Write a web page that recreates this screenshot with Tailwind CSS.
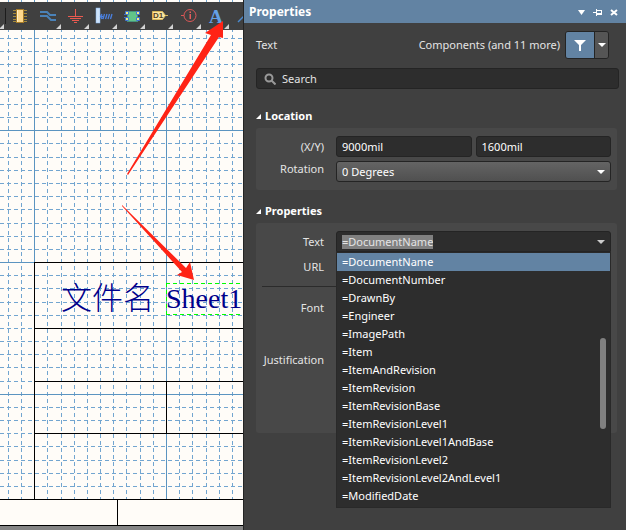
<!DOCTYPE html>
<html lang="en">

<head>
    <meta charset="UTF-8">
    <meta name="viewport" content="width=device-width, initial-scale=1.0">
    <title>Schematic - Properties</title>
    <script src="https://cdn.jsdelivr.net/npm/@tailwindcss/browser@4"></script>
</head>

<body class="relative flex min-h-screen overflow-hidden bg-[#404040] font-['Noto_Sans',sans-serif] text-[11px] leading-4 text-[#e4e4e4]">

    <!-- Schematic editor -->
    <main class="relative min-w-0 flex-1 overflow-hidden bg-[#fffcf8]">
        <svg class="absolute inset-0 h-full w-full" fill="none" shape-rendering="crispEdges" aria-label="Schematic sheet">
            <!-- Fine grid -->
            <g stroke="#72a5d0" stroke-dasharray="4 3">
                <path d="M0 38.5h900M0 51.5h900M0 64.5h900M0 77.5h900M0 91.5h900M0 104.5h900M0 117.5h900M0 143.5h900M0 157.5h900M0 170.5h900M0 183.5h900M0 196.5h900M0 209.5h900M0 223.5h900M0 236.5h900M0 249.5h900M0 275.5h900M0 288.5h900M0 302.5h900M0 315.5h900M0 328.5h900M0 341.5h900M0 354.5h900M0 367.5h900M0 381.5h900M0 407.5h900M0 420.5h900M0 433.5h900M0 446.5h900M0 460.5h900M0 473.5h900M0 486.5h900" />
                <path d="M8.5 0v499M21.5 0v499M47.5 0v499M61.5 0v499M74.5 0v499M87.5 0v499M100.5 0v499M113.5 0v499M126.5 0v499M140.5 0v499M153.5 0v499M179.5 0v499M192.5 0v499M206.5 0v499M219.5 0v499M232.5 0v499" />
            </g>
            <!-- Coarse grid -->
            <path stroke="#5b94c0" d="M0 130.5h900M0 262.5h900M0 394.5h900M34.5 0v499M166.5 0v499" />
            <!-- Title block -->
            <path stroke="#000" d="M34.5 499V262.5H900M34 328.5h900M34 381.5h900M34 433.5h900M166.5 381v52M0 499.5h900M117.5 499v26M0 525.5h900" />
            <path fill="#858585" d="M0 526h900v400H0z" />
            <path stroke="#00ff00" stroke-dasharray="4 3" d="M166 283.5h300M166.5 283v31M166 314.5h300" />
        </svg>
        <svg class="absolute inset-0 h-full w-full" aria-hidden="true">
            <g fill="#00008b">
                <text x="61" y="309" font-size="31" font-family="'Noto Sans CJK SC', sans-serif" font-weight="300">文件名</text>
                <text x="166" y="308" font-size="28" font-family="'Liberation Serif', serif">Sheet1</text>
            </g>
        </svg>

        <!-- Drawing toolbar -->
        <div class="absolute inset-x-0 top-[2px] h-7 bg-[#404040]">
            <svg class="h-7 w-[243px]" viewBox="0 2 243 28" fill="none" role="img" aria-label="Drawing tools">
                <path stroke="#1c1c1c" d="M5.500 8v16" />
                <!-- part -->
                <path stroke="#a48a3c" d="M13 10.500h14M13 13.500h14M13 16.500h14M13 19.500h14M13 21.500h14" />
                <rect x="16.500" y="9.500" width="7" height="13" fill="#ffd98c" stroke="#a87c28" />
                <path stroke="#fff0c8" d="M17.500 10v12" />
                <!-- wire -->
                <path stroke="#4a82b8" stroke-width="2" d="M40 12h7l3 3h6M40 16h7l4 4h5" />
                <!-- ground -->
                <path stroke="#ea5a50" d="M75.500 9v7M68 16.500h15M70 18.500h11M72 20.500h7M74 22.500h3" />
                <!-- bus -->
                <rect x="96" y="8" width="4" height="15" fill="#cfe3fa" stroke="#84b4ec" stroke-width=".5" />
                <path stroke="#4a80e0" stroke-width="1.300" d="M100 16.500h3M102 14l-1.500 2.500L102 19M103 19l1.500-5M105.500 19l1.500-5M108 19l1.500-5M110.500 19l1.500-5" />
                <path stroke="#3f73d0" d="M124 14.500h1M124 17.500h1" />
                <!-- sheet -->
                <rect x="127.500" y="11.500" width="10" height="10" fill="#62c489" stroke="#47947c" />
                <path fill="#f1ed82" stroke="#3f73d0" d="M125.500 11.500h3v3h-3zM125.500 17.500h3v3h-3zM136.500 11.500h3v3h-3zM136.500 17.500h3v3h-3z" />
                <!-- port -->
                <path fill="#ffe6a0" stroke="#d9b95b" d="M152.500 11.500h10l3 4-3 4h-10zM165 15.500h3" />
                <text x="153" y="18" font-size="8" font-weight="700" fill="#4f4223" font-family="'Liberation Sans', sans-serif">D1</text>
                <!-- directive -->
                <circle cx="190" cy="15.500" r="6" stroke="#dc5757" />
                <path stroke="#dc5757" d="M181 15.500h3" />
                <path fill="#e65c5c" d="M189.500 11.500h1.500v1.500h-1.500zM189.500 14h1.500v5h-1.500z" />
                <!-- text -->
                <text x="209" y="23" font-size="19" font-weight="700" fill="#64a0e6" font-family="'Liberation Serif', serif">A</text>
                <!-- line -->
                <path stroke="#4a8ad0" stroke-width="1.500" d="M238 22l6-6" />
                <path fill="#d2d2d2" d="M4 24v5H-1zM61 24v5h-5zM89 24v5h-5zM117 24v5h-5zM145 24v5h-5zM173 24v5h-5zM201 24v5h-5zM229 24v5h-5z" />
            </svg>
        </div>

        <!-- Pointers -->
        <svg class="absolute inset-0 h-full w-full" fill="#ff2315" aria-hidden="true">
            <path d="M127 174L211 35l-6-2 18-12v17l-4-1L128 175z" />
            <path d="M122 205l64 63 4-6 4 18-17-5 5-3-60-66z" />
        </svg>
    </main>

    <!-- Properties panel -->
    <aside class="w-[383px] shrink-0 border-l border-[#242424]">
        <header class="flex h-[23px] items-center bg-[#6283a3] pr-1.5 pl-[5px] text-white">
            <h1 class="flex-1 text-[12px] font-bold">Properties</h1>
            <div class="flex gap-1">
                <button aria-label="Menu"><svg class="size-3" viewBox="0 0 12 12"><path fill="#fff" d="M2 4h7l-3.500 5z" /></svg></button>
                <button aria-label="Pin"><svg class="size-3" viewBox="0 0 12 12" fill="none" stroke="#fff" shape-rendering="crispEdges"><path d="M1 6.500h4M4.500 3v7M4 4.500h5M9.500 4v5M4 7.500h5M4 8.500h5" /></svg></button>
                <button aria-label="Close"><svg class="size-3" viewBox="0 0 12 12" stroke="#fff" stroke-width="2"><path d="M3 4l6 5M9 4l-6 5" /></svg></button>
            </div>
        </header>

        <div class="flex items-center pt-2 pr-[17px] pl-3">
            <span class="flex-1">Text</span>
            <span>Components (and 11 more)</span>
            <div class="ml-[5px] flex h-7 overflow-hidden rounded-[3px] border border-[#242424]">
                <button class="flex w-7 items-center justify-center bg-[#6283a3]" aria-label="Filter"><svg class="size-3" viewBox="0 0 12 12"><path fill="#fff" d="M0 1h12L7 6v6H5V6z" /></svg></button>
                <button class="flex w-[14px] items-center justify-center border-l border-[#242424] bg-[#555]" aria-label="Filter options"><svg class="h-1 w-2" viewBox="0 0 8 4"><path fill="#fff" d="M0 0h8L4 4z" /></svg></button>
            </div>
        </div>

        <label class="mt-[9px] mr-[7px] ml-3 flex h-[21px] items-center gap-1.5 rounded-[3px] border border-[#242424] bg-[#2d2d2d] px-[7px]">
            <svg class="size-3" viewBox="0 0 12 12" fill="none" stroke="#999" stroke-width="2"><circle cx="5" cy="5" r="3.500" /><path d="M7.500 7.500l4 4" /></svg>
            <input class="h-4 min-w-0 flex-1 text-white outline-none placeholder:text-[#e4e4e4]" type="text" placeholder="Search" aria-label="Search">
        </label>

        <!-- Location -->
        <section class="mt-[19px] mr-[9px] ml-3">
            <h2 class="flex h-4 items-center gap-1 font-bold text-white"><svg class="size-[5px]" viewBox="0 0 5 5"><path fill="#fff" d="M5 0v5H0z" /></svg>Location</h2>
            <div class="mt-1 grid grid-cols-[68px_minmax(0,1fr)] gap-x-3 gap-y-1 rounded-[3px] bg-[#484848] pt-2 pr-1.5 pb-2">
                <label class="self-center text-right" for="loc-x">(X/Y)</label>
                <div class="flex gap-1">
                    <input id="loc-x" class="h-[21px] min-w-0 flex-1 rounded-[3px] border border-[#242424] bg-[#2d2d2d] px-[5px] text-white" type="text" value="9000mil">
                    <input class="h-[21px] min-w-0 flex-1 rounded-[3px] border border-[#242424] bg-[#2d2d2d] px-[5px] text-white" type="text" value="1600mil" aria-label="Y">
                </div>
                <label class="text-right" for="rotation">Rotation</label>
                <div class="relative">
                    <select id="rotation" class="block h-[21px] w-full appearance-none rounded-[3px] border border-[#242424] bg-linear-to-b from-[#646464] to-[#505050] px-[5px] text-white">
                        <option>0 Degrees</option>
                    </select>
                    <svg class="pointer-events-none absolute top-[9px] right-[6px] h-1 w-2" viewBox="0 0 8 4"><path fill="#fff" d="M0 0h8L4 4z" /></svg>
                </div>
            </div>
        </section>

        <!-- Properties -->
        <section class="mt-[13px] mr-[9px] ml-3">
            <h2 class="flex h-4 items-center gap-1 font-bold text-white"><svg class="size-[5px]" viewBox="0 0 5 5"><path fill="#fff" d="M5 0v5H0z" /></svg>Properties</h2>
            <div class="mt-1 h-[210px] rounded-[3px] bg-[#484848] pt-2 pr-1.5">
                <div class="grid grid-cols-[68px_minmax(0,1fr)] gap-x-3">
                    <label class="self-center text-right" for="text-value">Text</label>
                    <div class="relative">
                        <div class="flex h-[21px] items-center rounded-t-[3px] border border-[#242424] bg-[#2d2d2d] px-[5px]">
                            <input id="text-value" class="field-sizing-content h-[14px] bg-[#808080] text-[#e4e4e4] outline-none" type="text" value="=DocumentName">
                            <svg class="ml-auto h-1 w-2" viewBox="0 0 8 4"><path fill="#ccc" d="M0 0h8L4 4z" /></svg>
                        </div>
                        <ul class="absolute inset-x-0 top-[21px] z-10 border border-[#292929] bg-[#2d2d2d] pb-[2px] text-white" role="listbox" aria-label="Text values">
                            <li class="h-[18px] bg-[#6283a3] px-[5px] leading-[18px]" role="option" aria-selected="true">=DocumentName</li>
                            <li class="h-[18px] px-[5px] leading-[18px]" role="option">=DocumentNumber</li>
                            <li class="h-[18px] px-[5px] leading-[18px]" role="option">=DrawnBy</li>
                            <li class="h-[18px] px-[5px] leading-[18px]" role="option">=Engineer</li>
                            <li class="h-[18px] px-[5px] leading-[18px]" role="option">=ImagePath</li>
                            <li class="h-[18px] px-[5px] leading-[18px]" role="option">=Item</li>
                            <li class="h-[18px] px-[5px] leading-[18px]" role="option">=ItemAndRevision</li>
                            <li class="h-[18px] px-[5px] leading-[18px]" role="option">=ItemRevision</li>
                            <li class="h-[18px] px-[5px] leading-[18px]" role="option">=ItemRevisionBase</li>
                            <li class="h-[18px] px-[5px] leading-[18px]" role="option">=ItemRevisionLevel1</li>
                            <li class="h-[18px] px-[5px] leading-[18px]" role="option">=ItemRevisionLevel1AndBase</li>
                            <li class="h-[18px] px-[5px] leading-[18px]" role="option">=ItemRevisionLevel2</li>
                            <li class="h-[18px] px-[5px] leading-[18px]" role="option">=ItemRevisionLevel2AndLevel1</li>
                            <li class="h-[18px] px-[5px] leading-[18px]" role="option">=ModifiedDate</li>
                            <li class="absolute top-[85px] right-1 h-[91px] w-1.5 rounded-full bg-[#808080]" role="presentation"></li>
                        </ul>
                    </div>
                </div>
                <div class="mt-[7px] w-[68px] text-right">URL</div>
                <hr class="mt-[11px] ml-1.5 border-[#2b2b2b]">
                <div class="mt-[13px] w-[68px] text-right">Font</div>
                <div class="mt-9 w-[68px] text-right">Justification</div>
            </div>
        </section>
    </aside>
</body>

</html>
